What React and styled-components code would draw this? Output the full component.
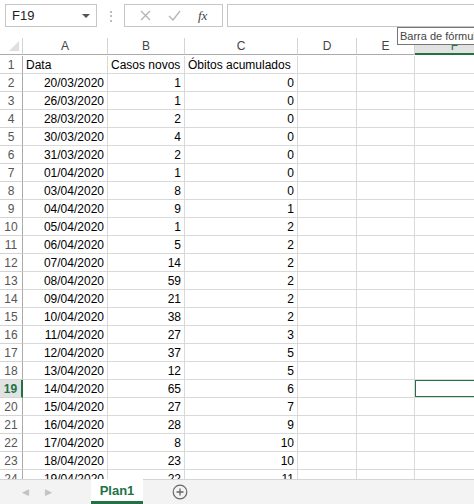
import React from 'react';
import styled, { createGlobalStyle } from 'styled-components';

const GlobalStyle = createGlobalStyle`
    html, body {
        margin: 0;
        padding: 0;
        background: #fff;
    }
    body {
        font-family: "Liberation Sans", Arial, sans-serif;
    }
`;

const COLS = [
    { key: 'A', width: 85 },
    { key: 'B', width: 77 },
    { key: 'C', width: 113 },
    { key: 'D', width: 59 },
    { key: 'E', width: 58 },
    { key: 'F', width: 80 },
];

const ROWS = [
    ['Data', 'Casos novos', 'Óbitos acumulados'],
    ['20/03/2020', 1, 0],
    ['26/03/2020', 1, 0],
    ['28/03/2020', 2, 0],
    ['30/03/2020', 4, 0],
    ['31/03/2020', 2, 0],
    ['01/04/2020', 1, 0],
    ['03/04/2020', 8, 0],
    ['04/04/2020', 9, 1],
    ['05/04/2020', 1, 2],
    ['06/04/2020', 5, 2],
    ['07/04/2020', 14, 2],
    ['08/04/2020', 59, 2],
    ['09/04/2020', 21, 2],
    ['10/04/2020', 38, 2],
    ['11/04/2020', 27, 3],
    ['12/04/2020', 37, 5],
    ['13/04/2020', 12, 5],
    ['14/04/2020', 65, 6],
    ['15/04/2020', 27, 7],
    ['16/04/2020', 28, 9],
    ['17/04/2020', 8, 10],
    ['18/04/2020', 23, 10],
    ['19/04/2020', 22, 11],
];

const GREEN = '#217346';

const Window = styled.div`
    position: relative;
    width: 474px;
    height: 504px;
    overflow: hidden;
    display: flex;
    flex-direction: column;
    background: #fff;
    font-size: 12px;
`;

const FormulaBar = styled.div`
    height: 38px;
    flex: none;
    display: flex;
    align-items: flex-start;
    padding: 4px 0 0 5px;
    box-sizing: border-box;
`;

const NameBox = styled.div`
    width: 92px;
    height: 23px;
    box-sizing: border-box;
    border: 1px solid #c6c6c6;
    display: flex;
    align-items: center;
    justify-content: space-between;
    padding: 0 6px 0 6px;
    color: #222;
    font-size: 13px;
`;

const Caret = styled.span`
    width: 0;
    height: 0;
    border-left: 4px solid transparent;
    border-right: 4px solid transparent;
    border-top: 4px solid #555;
`;

const Dots = styled.div`
    width: 27px;
    height: 23px;
    display: flex;
    align-items: center;
    justify-content: center;
    color: #9a9a9a;
    font-size: 12px;
    line-height: 1;
`;

const ButtonGroup = styled.div`
    width: 99px;
    height: 23px;
    box-sizing: border-box;
    border: 1px solid #c6c6c6;
    display: flex;
    align-items: center;
    justify-content: space-around;
    padding: 0 6px;
`;

const Fx = styled.span`
    font-family: "Liberation Serif", serif;
    font-style: italic;
    font-size: 13px;
    color: #444;
`;

const FormulaInput = styled.div`
    flex: 1;
    height: 23px;
    margin-left: 4px;
    box-sizing: border-box;
    border: 1px solid #c6c6c6;
    border-right: none;
`;

const Grid = styled.div`
    flex: 1;
    overflow: hidden;
    display: grid;
    grid-template-columns: 23px ${COLS.map(c => `${c.width}px`).join(' ')};
    grid-auto-rows: 18px;
    align-content: start;
`;

const Corner = styled.div`
    height: 17px;
    box-sizing: border-box;
    border-right: 1px solid #d4d4d4;
    border-bottom: 1px solid #ababab;
    position: relative;
    &::after {
        content: '';
        position: absolute;
        right: 3px;
        bottom: 3px;
        border-left: 10px solid transparent;
        border-bottom: 10px solid #dfdfdf;
    }
`;

const ColHead = styled.div`
    height: 17px;
    box-sizing: border-box;
    border-right: 1px solid #d4d4d4;
    border-bottom: ${p => (p.active ? `2px solid ${GREEN}` : '1px solid #ababab')};
    background: ${p => (p.active ? '#e2e2e2' : '#fff')};
    color: ${p => (p.active ? GREEN : '#444')};
    display: flex;
    align-items: center;
    justify-content: center;
    font-size: 12px;
`;

const RowHead = styled.div`
    box-sizing: border-box;
    border-right: ${p => (p.active ? `2px solid ${GREEN}` : '1px solid #ababab')};
    border-bottom: 1px solid #d4d4d4;
    background: ${p => (p.active ? '#e2e2e2' : '#fff')};
    color: ${p => (p.active ? GREEN : '#555')};
    font-weight: ${p => (p.active ? 'bold' : 'normal')};
    display: flex;
    align-items: center;
    justify-content: center;
    font-size: 12px;
`;

const Cell = styled.div`
    position: relative;
    box-sizing: border-box;
    border-right: 1px solid #d9d9d9;
    border-bottom: 1px solid #d9d9d9;
    display: flex;
    align-items: center;
    justify-content: ${p => (p.right ? 'flex-end' : 'flex-start')};
    padding: 0 3px;
    color: #000;
    font-size: 12px;
    white-space: nowrap;
    overflow: hidden;
`;

const Selection = styled.div`
    position: absolute;
    inset: -1px -1px -1px -1px;
    border: 2px solid ${GREEN};
    &::after {
        content: '';
        position: absolute;
        right: -4px;
        bottom: -4px;
        width: 5px;
        height: 5px;
        background: ${GREEN};
        border: 1px solid #fff;
    }
`;

const TabBar = styled.div`
    height: 25px;
    flex: none;
    display: flex;
    align-items: stretch;
    background: #f3f3f3;
    border-top: 1px solid #d4d4d4;
    box-sizing: border-box;
`;

const Arrows = styled.div`
    width: 91px;
    display: flex;
    align-items: center;
    padding-left: 22px;
    gap: 16px;
    box-sizing: border-box;
    color: #c2c2c2;
    font-size: 9px;
`;

const Tab = styled.div`
    width: 52px;
    margin-top: -1px;
    background: #fff;
    border-bottom: 3px solid ${GREEN};
    color: ${GREEN};
    font-weight: bold;
    font-size: 13px;
    display: flex;
    align-items: center;
    justify-content: center;
    box-sizing: border-box;
`;

const AddSheet = styled.div`
    width: 74px;
    display: flex;
    align-items: center;
    justify-content: center;
    color: #666;
`;

const Tooltip = styled.div`
    position: absolute;
    left: 397px;
    top: 27px;
    height: 18px;
    padding: 0 4px 0 2px;
    background: #fff;
    border: 1px solid #767676;
    box-sizing: border-box;
    font-size: 11px;
    color: #444;
    display: flex;
    align-items: center;
    white-space: nowrap;
`;

const CrossIcon = () => (
    <svg width="11" height="11" viewBox="0 0 11 11">
        <path d="M1 1 L10 10 M10 1 L1 10" stroke="#b4b4b4" strokeWidth="1.3" />
    </svg>
);

const CheckIcon = () => (
    <svg width="13" height="11" viewBox="0 0 13 11">
        <path d="M1 6 L5 10 L12 1" stroke="#b4b4b4" strokeWidth="1.3" fill="none" />
    </svg>
);

const PlusIcon = () => (
    <svg width="16" height="16" viewBox="0 0 16 16">
        <circle cx="8" cy="8" r="6.8" stroke="#666" strokeWidth="1.2" fill="none" />
        <path d="M8 4.5 V11.5 M4.5 8 H11.5" stroke="#666" strokeWidth="1.3" />
    </svg>
);

const SELECTED = { row: 19, col: 'F' };

export default function App() {
    return (
        <Window>
            <GlobalStyle />
            <FormulaBar>
                <NameBox>
                    <span>F19</span>
                    <Caret />
                </NameBox>
                <Dots>⋮</Dots>
                <ButtonGroup>
                    <CrossIcon />
                    <CheckIcon />
                    <Fx>fx</Fx>
                </ButtonGroup>
                <FormulaInput />
            </FormulaBar>
            <Grid>
                <Corner />
                {COLS.map(c => (
                    <ColHead key={c.key} active={c.key === SELECTED.col}>{c.key}</ColHead>
                ))}
                {ROWS.map((row, i) => {
                    const n = i + 1;
                    const header = i === 0;
                    return (
                        <React.Fragment key={n}>
                            <RowHead active={n === SELECTED.row}>{n}</RowHead>
                            {COLS.map((c, j) => {
                                const value = row[j];
                                const selected = n === SELECTED.row && c.key === SELECTED.col;
                                return (
                                    <Cell key={c.key} right={!header && value !== undefined}>
                                        {value}
                                        {selected && <Selection />}
                                    </Cell>
                                );
                            })}
                        </React.Fragment>
                    );
                })}
            </Grid>
            <TabBar>
                <Arrows>
                    <span>◀</span>
                    <span>▶</span>
                </Arrows>
                <Tab>Plan1</Tab>
                <AddSheet>
                    <PlusIcon />
                </AddSheet>
            </TabBar>
            <Tooltip>Barra de fórmulas</Tooltip>
        </Window>
    );
}
